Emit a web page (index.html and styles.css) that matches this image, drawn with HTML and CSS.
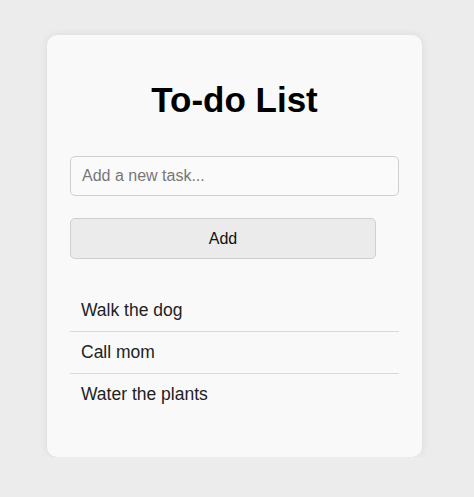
FILE: index.html
```html
<!DOCTYPE html>
<html lang="en">
<head>
    <meta charset="UTF-8">
    <meta name="viewport" content="width=device-width, initial-scale=1">
    <link rel="stylesheet" href="styles.css">
    <title>To-do List</title>
</head>
<body>
<div class="card">
    <h1 class="title">To-do List</h1>
    <input class="task-input" type="text" placeholder="Add a new task...">
    <button class="add-button">Add</button>
    <ul class="task-list">
        <li class="task">Walk the dog</li>
        <li class="task">Call mom</li>
        <li class="task">Water the plants</li>
    </ul>
</div>
</body>
</html>
```

FILE: styles.css
```css
body {
    margin: 0;
    background-color: #ececec;
    font-family: "Liberation Sans", Arial, sans-serif;
}
.card {
    box-sizing: border-box;
    width: 375px;
    height: 422px;
    margin: 35px 0 0 47px;
    padding: 45px 23px 0 23px;
    background-color: #f9f9f9;
    border-radius: 10px;
    box-shadow: 0 0 8px rgba(0, 0, 0, 0.08);
}
.title {
    margin: 0 0 36px 0;
    font-size: 35px;
    font-weight: bold;
    text-align: center;
    color: #000;
}
.task-input {
    display: block;
    box-sizing: border-box;
    width: 100%;
    height: 40px;
    padding: 0 11px;
    border: 1px solid #cfcfcf;
    border-radius: 5px;
    background-color: #fafafa;
    font-family: inherit;
    font-size: 16px;
    color: #222;
}
.task-input::placeholder {
    color: #777;
}
.add-button {
    display: block;
    box-sizing: border-box;
    width: 306px;
    height: 41px;
    margin-top: 22px;
    border: 1px solid #cfcfcf;
    border-radius: 5px;
    background-color: #ebebeb;
    font-family: inherit;
    font-size: 16px;
    color: #111;
    cursor: pointer;
}
.task-list {
    list-style: none;
    margin: 31px 0 0 0;
    padding: 0;
}
.task {
    padding: 10px 11px 10px 11px;
    font-size: 17.5px;
    line-height: 21px;
    color: #222;
    border-bottom: 1px solid #d9d9d9;
}
.task:last-child {
    border-bottom: none;
}
```
